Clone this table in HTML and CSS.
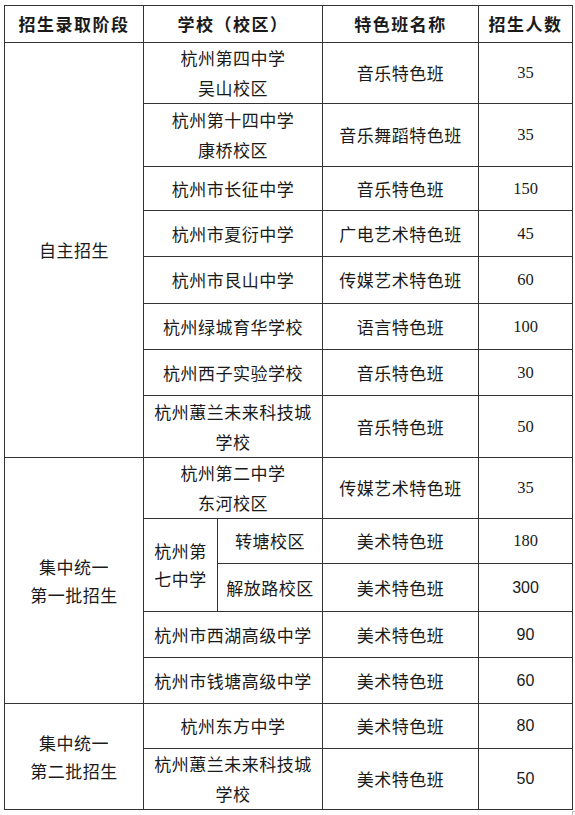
FILE: index.html
```html
<!DOCTYPE html>
<html lang="zh-CN">
<head>
<meta charset="utf-8">
<title>特色班招生</title>
<link rel="stylesheet" href="styles.css">
</head>
<body>
<table class="tbl">
  <colgroup>
    <col class="c1"><col class="c2a"><col class="c2b"><col class="c3"><col class="c4">
  </colgroup>
  <thead>
    <tr class="h-head">
      <th>招生录取阶段</th>
      <th colspan="2">学校（校区）</th>
      <th>特色班名称</th>
      <th>招生人数</th>
    </tr>
  </thead>
  <tbody>
    <tr class="h61">
      <td rowspan="8" class="stage">自主招生</td>
      <td colspan="2" class="school">杭州第四中学<br>吴山校区</td>
      <td>音乐特色班</td>
      <td class="num serif">35</td>
    </tr>
    <tr class="h63">
      <td colspan="2" class="school">杭州第十四中学<br>康桥校区</td>
      <td>音乐舞蹈特色班</td>
      <td class="num serif">35</td>
    </tr>
    <tr class="h44">
      <td colspan="2">杭州市长征中学</td>
      <td>音乐特色班</td>
      <td class="num serif">150</td>
    </tr>
    <tr class="h46">
      <td colspan="2">杭州市夏衍中学</td>
      <td>广电艺术特色班</td>
      <td class="num serif">45</td>
    </tr>
    <tr class="h47">
      <td colspan="2">杭州市艮山中学</td>
      <td>传媒艺术特色班</td>
      <td class="num serif">60</td>
    </tr>
    <tr class="h46">
      <td colspan="2">杭州绿城育华学校</td>
      <td>语言特色班</td>
      <td class="num serif">100</td>
    </tr>
    <tr class="h46">
      <td colspan="2">杭州西子实验学校</td>
      <td>音乐特色班</td>
      <td class="num serif">30</td>
    </tr>
    <tr class="h62">
      <td colspan="2" class="school">杭州蕙兰未来科技城<br>学校</td>
      <td>音乐特色班</td>
      <td class="num serif">50</td>
    </tr>
    <tr class="h61">
      <td rowspan="5" class="stage">集中统一<br>第一批招生</td>
      <td colspan="2" class="school">杭州第二中学<br>东河校区</td>
      <td>传媒艺术特色班</td>
      <td class="num serif">35</td>
    </tr>
    <tr class="h45">
      <td rowspan="2" class="stage">杭州第<br>七中学</td>
      <td>转塘校区</td>
      <td>美术特色班</td>
      <td class="num serif">180</td>
    </tr>
    <tr class="h48">
      <td>解放路校区</td>
      <td>美术特色班</td>
      <td class="num sans">300</td>
    </tr>
    <tr class="h46">
      <td colspan="2">杭州市西湖高级中学</td>
      <td>美术特色班</td>
      <td class="num sans">90</td>
    </tr>
    <tr class="h46">
      <td colspan="2">杭州市钱塘高级中学</td>
      <td>美术特色班</td>
      <td class="num sans">60</td>
    </tr>
    <tr class="h45">
      <td rowspan="2" class="stage">集中统一<br>第二批招生</td>
      <td colspan="2">杭州东方中学</td>
      <td>美术特色班</td>
      <td class="num sans">80</td>
    </tr>
    <tr class="h60">
      <td colspan="2" class="school">杭州蕙兰未来科技城<br>学校</td>
      <td>美术特色班</td>
      <td class="num sans">50</td>
    </tr>
  </tbody>
</table>
<div class="corner"></div>
</body>
</html>
```

FILE: styles.css
```css
html, body {
  margin: 0;
  padding: 0;
  background: #ffffff;
}
body {
  padding: 5px 0 0 4px;
  font-family: "Noto Sans CJK SC", "Noto Sans", sans-serif;
  color: #1a1a1a;
}
.tbl {
  border-collapse: collapse;
  table-layout: fixed;
  width: 569px;
}
.c1 { width: 139px; }
.c2a { width: 74px; }
.c2b { width: 105px; }
.c3 { width: 156px; }
.c4 { width: 94px; }

.tbl th, .tbl td {
  border: 1px solid #333;
  padding: 0;
  text-align: center;
  vertical-align: middle;
  font-size: 17px;
  line-height: 28px;
  letter-spacing: 0.5px;
  font-weight: 400;
}
.tbl th {
  font-weight: 700;
  letter-spacing: 1.5px;
}
.tbl .school {
  line-height: 30px;
}
.tbl .num {
  letter-spacing: 0;
}
.tbl .serif {
  font-family: "Liberation Serif", serif;
  font-size: 16.5px;
}
.tbl .sans {
  font-family: "Liberation Sans", sans-serif;
  font-size: 16px;
}
.h-head { height: 37px; }
.h44 { height: 44px; }
.h45 { height: 45px; }
.h46 { height: 46px; }
.h47 { height: 47px; }
.h48 { height: 48px; }
.h60 { height: 60px; }
.h61 { height: 61px; }
.h62 { height: 62px; }
.h63 { height: 63px; }

.corner {
  width: 4px;
  height: 6px;
  margin: 1px 0 0 568px;
  border-left: 1px solid #bbb;
  border-top: 1px solid #bbb;
}
```
